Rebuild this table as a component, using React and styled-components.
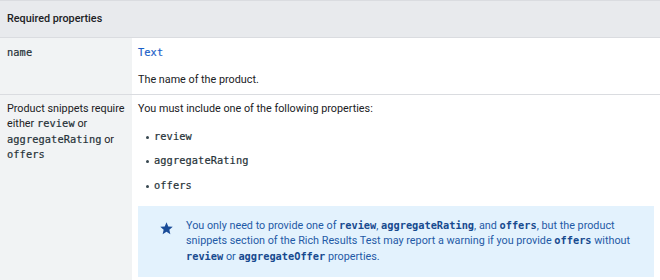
import React from "react";
import styled, { createGlobalStyle } from "styled-components";

const Global = createGlobalStyle`
  html, body { margin: 0; padding: 0; background: #fff; }
  body {
    font-family: Roboto, "Noto Sans", Arial, sans-serif;
    font-size: 10.8px;
    line-height: 15.4px;
    color: #202124;
  }
`;

const Table = styled.div`
  display: grid;
  grid-template-columns: 132px 1fr;
  width: 660px;
`;

const HeaderCell = styled.div`
  grid-column: 1 / -1;
  background: #e8eaed;
  border-top: 1px solid #dadce0;
  padding: 10px 7px 11px;
  font-weight: 500;
`;

const KeyCell = styled.div`
  background: #f1f3f4;
  border-top: 1px solid #dadce0;
  padding: 6.2px 7px 6.2px 7px;
`;

const ValueCell = styled.div`
  background: #fff;
  border-top: 1px solid #dadce0;
  padding: 6.2px 6px 6.2px 6px;
`;

const Para = styled.p`
  margin: 0;
  & + & { margin-top: 12.3px; }
`;

const Code = styled.code`
  font-family: "DejaVu Sans Mono", "Liberation Mono", monospace;
  font-size: 10.3px;
  line-height: 1;
  letter-spacing: 0.1px;
  color: ${(p) => (p.$link ? "#1a5fc8" : "#263238")};
  -webkit-text-stroke: 0.2px currentColor;
`;

const List = styled.ul`
  margin: 12.3px 0 0;
  padding: 0 0 0 16px;
  list-style: none;
`;

const Item = styled.li`
  position: relative;
  & + & { margin-top: 9.2px; }
  &::before {
    content: "";
    position: absolute;
    left: -8px;
    top: 7px;
    width: 3px;
    height: 3px;
    border-radius: 50%;
    background: #37474f;
  }
`;

const Note = styled.aside`
  display: flex;
  align-items: flex-start;
  gap: 12px;
  margin-top: 13px;
  padding: 11.5px 14px 12.5px 21px;
  background: #e3f2fd;
  color: #1f5aa6;
`;

const NoteIcon = styled.svg`
  flex: none;
  width: 15px;
  height: 15px;
  margin-top: 3px;
  fill: #1a4c98;
`;

const NoteCode = styled.code`
  font-family: "DejaVu Sans Mono", "Liberation Mono", monospace;
  font-size: 10.3px;
  line-height: 1;
  font-weight: 700;
  color: #174a8f;
`;

export default function App() {
  return (
    <>
      <Global />
      <Table>
        <HeaderCell>Required properties</HeaderCell>

        <KeyCell>
          <Code>name</Code>
        </KeyCell>
        <ValueCell>
          <Para>
            <Code $link>Text</Code>
          </Para>
          <Para>The name of the product.</Para>
        </ValueCell>

        <KeyCell>
          Product snippets require either <Code>review</Code> or{" "}
          <Code>aggregateRating</Code> or <Code>offers</Code>
        </KeyCell>
        <ValueCell>
          <Para>You must include one of the following properties:</Para>
          <List>
            <Item>
              <Code>review</Code>
            </Item>
            <Item>
              <Code>aggregateRating</Code>
            </Item>
            <Item>
              <Code>offers</Code>
            </Item>
          </List>
          <Note>
            <NoteIcon viewBox="0 0 24 24">
              <path d="M12 17.27L18.18 21l-1.64-7.03L22 9.24l-7.19-.61L12 2 9.19 8.63 2 9.24l5.46 4.73L5.82 21z" />
            </NoteIcon>
            <div>
              You only need to provide one of <NoteCode>review</NoteCode>,{" "}
              <NoteCode>aggregateRating</NoteCode>, and <NoteCode>offers</NoteCode>,
              but the product snippets section of the Rich Results Test may
              report a warning if you provide <NoteCode>offers</NoteCode> without{" "}
              <NoteCode>review</NoteCode> or <NoteCode>aggregateOffer</NoteCode>{" "}
              properties.
            </div>
          </Note>
        </ValueCell>
      </Table>
    </>
  );
}
